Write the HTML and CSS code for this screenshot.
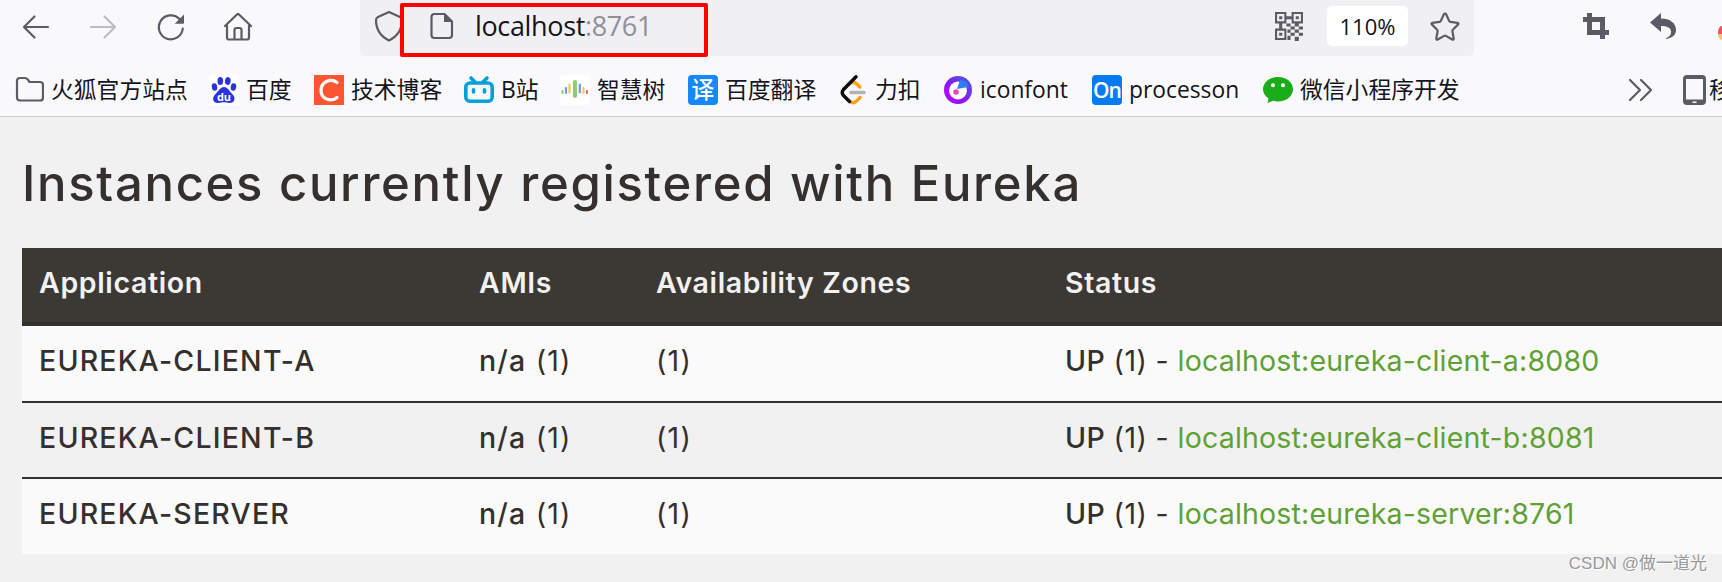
FILE: index.html
```html
<!DOCTYPE html>
<html lang="zh-CN">
  <head>
    <meta charset="UTF-8" />
    <meta name="viewport" content="width=device-width, initial-scale=1.0" />
    <title>Eureka</title>
    <link rel="stylesheet" href="styles.css">
  </head>
  <body>
    <header class="browser">
      <div class="toolbar">
        <nav class="nav-buttons">
          <svg class="icon" width="28" height="28" viewBox="0 0 28 28"><path d="M26 14H2M12.500 3.500L2 14l10.500 10.500" /></svg>
          <svg class="icon disabled" width="28" height="28" viewBox="0 0 28 28"><path d="M2 14h24M15.500 3.500L26 14 15.500 24.500" /></svg>
          <svg class="icon" width="28" height="28" viewBox="0 0 28 28"><path d="M25.800 15.500A12 12 0 1 1 22.500 6" /><path class="solid" d="M27 1.500v8.500a.8.8 0 0 1-.8.800h-8.500z" /></svg>
          <svg class="icon" width="28" height="28" viewBox="0 0 28 28"><path d="M1 13L13 1.500q1-1 2 0L27 13M3 12v12.500q0 2 2 2h18q2 0 2-2V12M10.500 26v-9q0-2 2-2h3q2 0 2 2v9" /></svg>
        </nav>
        <div class="urlbar">
          <svg class="icon shield" width="30" height="32" viewBox="0 0 30 32"><path d="M15 2L26 7q2 1 2 3c0 9-4 16-13 20.500C6 26 2 19 2 10q0-2 2-3z" /></svg>
          <svg class="icon page" width="24" height="28" viewBox="0 0 24 28"><path d="M4.500 2h10l7.500 7.500V23q0 3-3 3H4.500q-3 0-3-3V5q0-3 3-3z" /><path class="solid" d="M14 2l8 8h-8z" /></svg>
          <span class="url">localhost<span class="port">:8761</span></span>
          <div class="url-actions">
            <svg class="qr" width="28" height="29" viewBox="0 0 27 28"><path d="M0 0h11v11H0zM2 2v7h7V2zM4 4h3v3H4zM16 0h11v11H16zM18 2v7h7V2zM20 4h3v3h-3zM0 16h11v11H0zM2 18v7h7v-7zM4 20h3v3H4zM11 4h5v3h-5zM4 11h3v5H4zM11 11h4v3h-4zM15 14h4v3h-4zM19 11h4v3h-4zM23 14h4v3h-4zM12 17h3v3h-3zM19 17h4v3h-4zM15 20h4v3h-4zM23 20h4v3h-4zM12 23h3v4h-3zM19 24h4v4h-4z" fill-rule="evenodd" /></svg>
            <span class="zoom">110%</span>
            <svg class="icon" width="30" height="30" viewBox="0 0 30 30"><path d="M15 1.500q.7 0 1.200.9l3 6.600q.4.800 1.200.9l7.200.9q1.400.4.600 1.600l-5.400 5.400q-.6.600-.4 1.500l1.300 7.200q0 1.500-1.500 1l-6.300-3.600q-.9-.5-1.800 0l-6.300 3.600q-1.500.5-1.500-1l1.300-7.200q.2-.9-.4-1.500L1.800 12.400q-.8-1.200.6-1.600l7.200-.9q.8-.1 1.200-.9l3-6.600q.5-.9 1.200-.9z" /></svg>
          </div>
          <div class="highlight"></div>
        </div>
        <div class="extensions">
          <svg class="glyph" width="26" height="26" viewBox="0 0 26 26"><path d="M4 0h5v4h13v13h4v5h-4v4h-5v-4H4V9H0V4h4zM9 9v8h8V9z" fill-rule="evenodd" /></svg>
          <svg class="glyph" width="26" height="26" viewBox="0 0 26 26"><path d="M0 9.500L11 0v5.500C20 5.500 26 10 26 17c0 5-4 8.500-11 9 5-2.500 6.500-5 6-8-.5-3.500-4-5-10-5v6z" /></svg>
          <svg width="4" height="14" viewBox="0 0 4 14"><path fill="#fb4f5b" d="M4 0Q0 0 0 8h4z" /><path fill="#fbc36b" d="M0 8h4v6Q0 13 0 8z" /></svg>
        </div>
      </div>

      <div class="bookmarks">
        <a class="bookmark"><svg class="icon" width="30" height="30" viewBox="0 0 30 30"><path d="M3 8V6q0-3 3-3h5q1.500 0 2.500 1.200L15.500 7H26q3 0 3 3v12.500q0 3-3 3H6q-3 0-3-3z" /></svg>火狐官方站点</a>
        <a class="bookmark">
          <svg width="30" height="30" viewBox="0 0 30 30"><rect width="30" height="30" rx="3" fill="#fff" /><g fill="#2932e1"><ellipse cx="5.500" cy="12" rx="2.700" ry="3.800" transform="rotate(-10 5.500 12)" /><ellipse cx="11.300" cy="6" rx="2.800" ry="3.900" /><ellipse cx="18.800" cy="6" rx="2.800" ry="3.900" transform="rotate(8 18.800 6)" /><ellipse cx="24.500" cy="12" rx="2.700" ry="3.800" transform="rotate(10 24.500 12)" /><path d="M15 12c4 0 5 4 7.500 6.200C28 23 25 28 21 28c-3 0-3.500-.7-6-.7s-3 .7-6 .7c-5 0-7-5-2-9.500C10 16 11 12 15 12z" /></g><text class="du" x="15" y="25.500">du</text></svg>百度
        </a>
        <a class="bookmark"><svg width="30" height="30" viewBox="0 0 30 30"><rect width="30" height="30" fill="#fc5531" /><path d="M23 7.500C17 3 7.500 6 7 15.200 7 24 17 27.500 23 22.500" fill="none" stroke="#fff" stroke-width="3.200" stroke-linecap="round" /></svg>技术博客</a>
        <a class="bookmark"><svg width="30" height="30" viewBox="0 0 30 30"><g fill="none" stroke="#00a1d6" stroke-width="3.600" stroke-linecap="round"><rect x="1.800" y="8" width="26.400" height="18.200" rx="4" /><path d="M7 3l4 4M23 3l-4 4" /><path d="M9.500 14.800v2.200M20.500 14.800v2.200" /></g></svg>B站</a>
        <a class="bookmark"><svg width="30" height="30" viewBox="0 0 30 30"><rect width="30" height="30" rx="4" fill="#fff" /><g fill="none" stroke-width="2.200" stroke-linecap="round"><path stroke="#8bc77b" d="M2.500 16v2" /><path stroke="#6a9be8" d="M6 13v5" /><path stroke="#f4c95c" d="M9.500 9.500v8" /><path stroke="#8fcb77" stroke-width="4" d="M15 7v14" /><path stroke="#6a9be8" d="M19.800 9.500v8" /><path stroke="#f4c95c" d="M23.500 13v5" /><path stroke="#dc6b65" d="M27 16v2" /></g></svg>智慧树</a>
        <a class="bookmark"><span class="tile translate">译</span>百度翻译</a>
        <a class="bookmark"><svg width="30" height="30" viewBox="0 0 30 30"><g fill="none" stroke-width="3.400" stroke-linecap="round" stroke-linejoin="round"><path stroke="#ffa116" d="M14 8q2-1.500 3.800 0l4 4M22 22.500l-4 4q-3 2.500-6 0" /><path stroke="#b3b3b3" d="M13 17.500h13" /><path stroke="#070706" d="M18 1.800L5.500 14.500q-2.500 3 0 6l6 6" /></g></svg>力扣</a>
        <a class="bookmark">
          <svg width="30" height="30" viewBox="0 0 30 30">
            <defs><linearGradient id="ring" x1="0" y1="1" x2="1" y2="0"><stop offset="0" stop-color="#c800ff" /><stop offset=".45" stop-color="#8c16fa" /><stop offset="1" stop-color="#3e67d8" /></linearGradient></defs>
            <circle cx="15" cy="15" r="14" fill="url(#ring)" /><circle cx="15" cy="15.500" r="9" fill="#fff" /><path fill="#2f7df6" d="M14 14l3-9q9 1 8 7z" /><circle cx="13" cy="17" r="2.800" fill="#e846b5" />
          </svg>iconfont
        </a>
        <a class="bookmark"><span class="tile on">On</span>processon</a>
        <a class="bookmark"><svg width="30" height="30" viewBox="0 0 30 30"><path fill="#1aad19" d="M15 2c8.500 0 15 5.500 15 12.300S23.500 26.500 15 26.500c-2 0-3.500-.2-5-.7L4.500 28l1-4.500C2 21 0 18 0 14.300 0 7.500 6.500 2 15 2z" /><circle cx="10" cy="10.300" r="2" fill="#fff" /><circle cx="20" cy="10.300" r="2" fill="#fff" /></svg>微信小程序开发</a>
        <svg class="icon chevrons" width="26" height="24" viewBox="0 0 26 24"><path d="M2 2l10 10L2 22M13 2l10 10-10 10" /></svg>
        <a class="bookmark mobile"><svg width="24" height="30" viewBox="0 0 24 30"><path fill="#5b5b66" fill-rule="evenodd" d="M4 0h15q4 0 4 4v22q0 4-4 4H4q-4 0-4-4V4q0-4 4-4zM3 4v20.500h17V4zM9.500 26.500v1.500h4v-1.500z" /></svg>移</a>
      </div>
    </header>

    <main class="content">
      <h1>Instances currently registered with Eureka</h1>
      <table class="instances">
        <colgroup>
          <col class="col-app" />
          <col class="col-amis" />
          <col class="col-zones" />
          <col />
        </colgroup>
        <thead>
          <tr>
            <th>Application</th>
            <th>AMIs</th>
            <th>Availability Zones</th>
            <th>Status</th>
          </tr>
        </thead>
        <tbody>
          <tr>
            <td><b>EUREKA-CLIENT-A</b></td>
            <td><b>n/a</b> (1)</td>
            <td>(1)</td>
            <td><b>UP</b> (1) - <a class="link">localhost:eureka-client-a:8080</a></td>
          </tr>
          <tr>
            <td><b>EUREKA-CLIENT-B</b></td>
            <td><b>n/a</b> (1)</td>
            <td>(1)</td>
            <td><b>UP</b> (1) - <a class="link">localhost:eureka-client-b:8081</a></td>
          </tr>
          <tr>
            <td><b>EUREKA-SERVER</b></td>
            <td><b>n/a</b> (1)</td>
            <td>(1)</td>
            <td><b>UP</b> (1) - <a class="link">localhost:eureka-server:8761</a></td>
          </tr>
        </tbody>
      </table>
      <div class="watermark">CSDN @做一道光</div>
    </main>
  </body>
</html>
```
FILE: styles.css
```css
* {
  box-sizing: border-box;
}
body {
  margin: 0;
  height: 582px;
  overflow: hidden;
  background-color: #f1f1f1;
  font-family: Inter, "Noto Sans CJK SC", sans-serif;
  color: #34302d;
}
svg {
  display: block;
  flex: none;
}

/* browser chrome */
.browser {
  height: 117px;
  background: #f9f9fb;
  border-bottom: 1px solid #cccccc;
  font-family: "Open Sans", "Noto Sans CJK SC", sans-serif;
  color: #15141a;
}
.toolbar {
  display: flex;
  height: 56px;
}
.icon {
  fill: none;
  stroke: #5b5b66;
  stroke-width: 2.2;
  stroke-linecap: round;
  stroke-linejoin: round;
}
.icon .solid {
  fill: #5b5b66;
  stroke: none;
}
.disabled {
  stroke: #bcbcc1;
}
.nav-buttons {
  display: flex;
  gap: 39.3px;
  width: 360px;
  padding: 13px 0 0 22px;
}
.urlbar {
  position: relative;
  display: flex;
  width: 1114px;
  background: #f0f0f4;
  border-radius: 0 0 6px 6px;
}
.shield {
  margin: 10px 0 0 14px;
}
.page {
  margin: 12px 0 0 26px;
}
.url {
  margin-left: 21px;
  font-size: 27px;
  line-height: 52px;
  letter-spacing: -0.35px;
}
.port {
  color: #8f8f96;
}
.url-actions {
  display: flex;
  align-items: flex-start;
  margin-left: auto;
  padding: 12px 14px 0 0;
}
.qr {
  fill: #5b5b66;
}
.zoom {
  width: 81px;
  height: 40px;
  margin: -6px 22px 0 24px;
  border-radius: 5px;
  background: #fff;
  font-size: 22px;
  line-height: 40px;
  text-align: center;
}
/* red frame drawn over the address */
.highlight {
  position: absolute;
  left: 40px;
  top: 3px;
  width: 308px;
  height: 54px;
  border: 4px solid #fe0000;
  border-radius: 2px;
}
.extensions {
  display: flex;
  align-items: flex-start;
  gap: 41px;
  padding: 13px 0 0 109px;
}
.extensions svg:last-child {
  margin: 13px 0 0 1px;
}
.glyph {
  fill: #5b5b66;
}

.bookmarks {
  display: grid;
  grid-template-columns: 195px 105px 150px 96px 128px 150px 105px 149px 171px 365px 55px 200px;
  align-items: center;
  width: 1722px;
  height: 60px;
  padding: 8px 0 0 14px;
  overflow: hidden;
}
.bookmark {
  display: flex;
  align-items: center;
  gap: 7px;
  height: 30px;
  font-size: 22.800px;
  line-height: 30px;
  white-space: nowrap;
}
.mobile {
  gap: 2px;
}
.tile {
  width: 30px;
  height: 30px;
  border-radius: 4px;
  background: #1687fd;
  color: #fff;
  text-align: center;
}
.translate {
  font-weight: 500;
}
.on {
  background: #067bef;
  font-size: 21px;
  font-weight: 600;
  letter-spacing: -1px;
}
.du {
  fill: #fff;
  font-family: "Open Sans", sans-serif;
  font-size: 11px;
  font-weight: 700;
  text-anchor: middle;
}

/* eureka dashboard */
.content {
  padding-left: 22px;
}
h1 {
  margin: 0;
  padding-top: 37px;
  height: 131px;
  font-size: 49px;
  line-height: 60px;
  font-weight: 500;
  letter-spacing: 1.700px;
  white-space: nowrap;
}
.instances {
  width: 1740px;
  table-layout: fixed;
  border-collapse: separate;
  border-spacing: 0;
  font-size: 28.500px;
}
.col-app {
  width: 440px;
}
.col-amis {
  width: 177px;
}
.col-zones {
  width: 409px;
}
th,
td {
  height: 76px;
  padding: 0 17px 6px;
  text-align: left;
  white-space: nowrap;
}
th {
  height: 78px;
  padding-bottom: 6px;
  background-color: #3c3833;
  border-bottom: 4px solid #34302d;
  color: #f1f1f1;
  font-weight: 600;
  letter-spacing: 0.65px;
}
td {
  border-bottom: 2px solid #34302d;
  letter-spacing: 1.2px;
}
td:last-child {
  letter-spacing: 0.4px;
}
tbody tr:nth-child(odd) {
  background-color: #fafafa;
}
tbody tr:first-child td {
  height: 77px;
  padding-bottom: 7px;
}
tbody tr:last-child td {
  height: 75px;
  border-bottom: none;
}
b {
  font-weight: 550;
}
.link {
  color: #5fa134;
  letter-spacing: 0.2px;
}
.watermark {
  padding: 0 15px 0 0;
  text-align: right;
  font-family: "Liberation Sans", "Noto Sans CJK SC", sans-serif;
  font-size: 17px;
  line-height: 20px;
  color: #999;
  text-shadow: 1px 1px 0 #fff;
}
```
